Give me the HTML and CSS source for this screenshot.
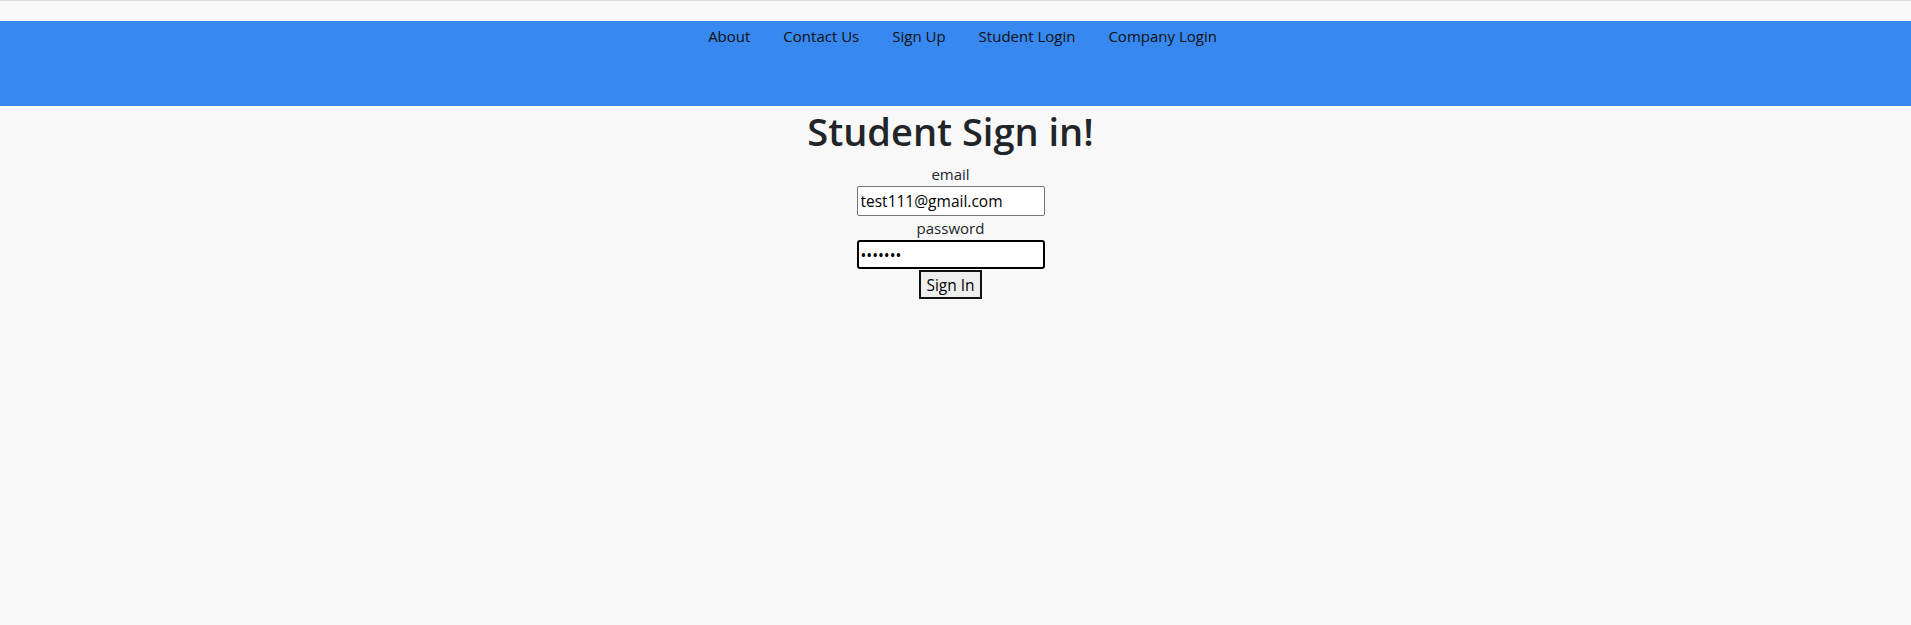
FILE: index.html
```html
<!DOCTYPE html>
<html lang="en">
<head>
<meta charset="utf-8">
<title>Student Sign in</title>
<link rel="stylesheet" href="styles.css">
</head>
<body>
<div class="topline"></div>
<header class="navbar">
  <nav class="nav">
    <a href="#">About</a>
    <a href="#">Contact Us</a>
    <a href="#">Sign Up</a>
    <a href="#">Student Login</a>
    <a href="#">Company Login</a>
  </nav>
</header>
<main class="signin">
  <h1 class="title">Student Sign in!</h1>
  <form class="form">
    <label class="label" for="email">email</label>
    <input class="field" id="email" type="text" value="test111@gmail.com">
    <label class="label" for="pw">password</label>
    <input class="field field-focus" id="pw" type="password" value="1234567">
    <button class="btn" type="button">Sign In</button>
  </form>
</main>
</body>
</html>
```
FILE: styles.css
```css
* { box-sizing: border-box; }
html, body { margin: 0; padding: 0; }
body {
  background: #f8f8f8;
  color: #212529;
  font-family: "Open Sans", "Noto Sans", sans-serif;
  font-size: 15px;
  line-height: 24px;
}
.topline {
  height: 1px;
  background: #dcdcdc;
  margin-bottom: 20px;
}
.navbar {
  background: #3788f0;
  height: 85px;
  padding-top: 3px;
}
.nav {
  display: flex;
  justify-content: center;
  gap: 33px;
  padding-left: 14px;
}
.nav a {
  color: #111;
  text-decoration: none;
  font-size: 15px;
}
.signin {
  display: flex;
  flex-direction: column;
  align-items: center;
  padding-right: 10px;
}
.title {
  margin: 1px 0 7px;
  font-size: 38px;
  line-height: 48px;
  font-weight: 600;
  color: #212529;
}
.form {
  display: flex;
  flex-direction: column;
  align-items: center;
}
.label {
  display: block;
  font-size: 15px;
  line-height: 24px;
  color: #212529;
}
.field {
  width: 188px;
  height: 30px;
  margin: 0;
  padding: 1px 3px;
  font-family: inherit;
  font-size: 15.5px;
  color: #000;
  background: #fff;
  border: 1px solid #767676;
  border-radius: 2px;
}
.field-focus {
  border: 2px solid #000;
  border-radius: 3px;
  height: 29px;
  padding: 0 2px;
  outline: none;
}
.btn {
  margin-top: 1px;
  width: 63px;
  height: 29px;
  padding: 0;
  font-family: inherit;
  font-size: 15.5px;
  color: #000;
  background: #efefef;
  border: 2px solid #111;
  border-radius: 0;
}
```
